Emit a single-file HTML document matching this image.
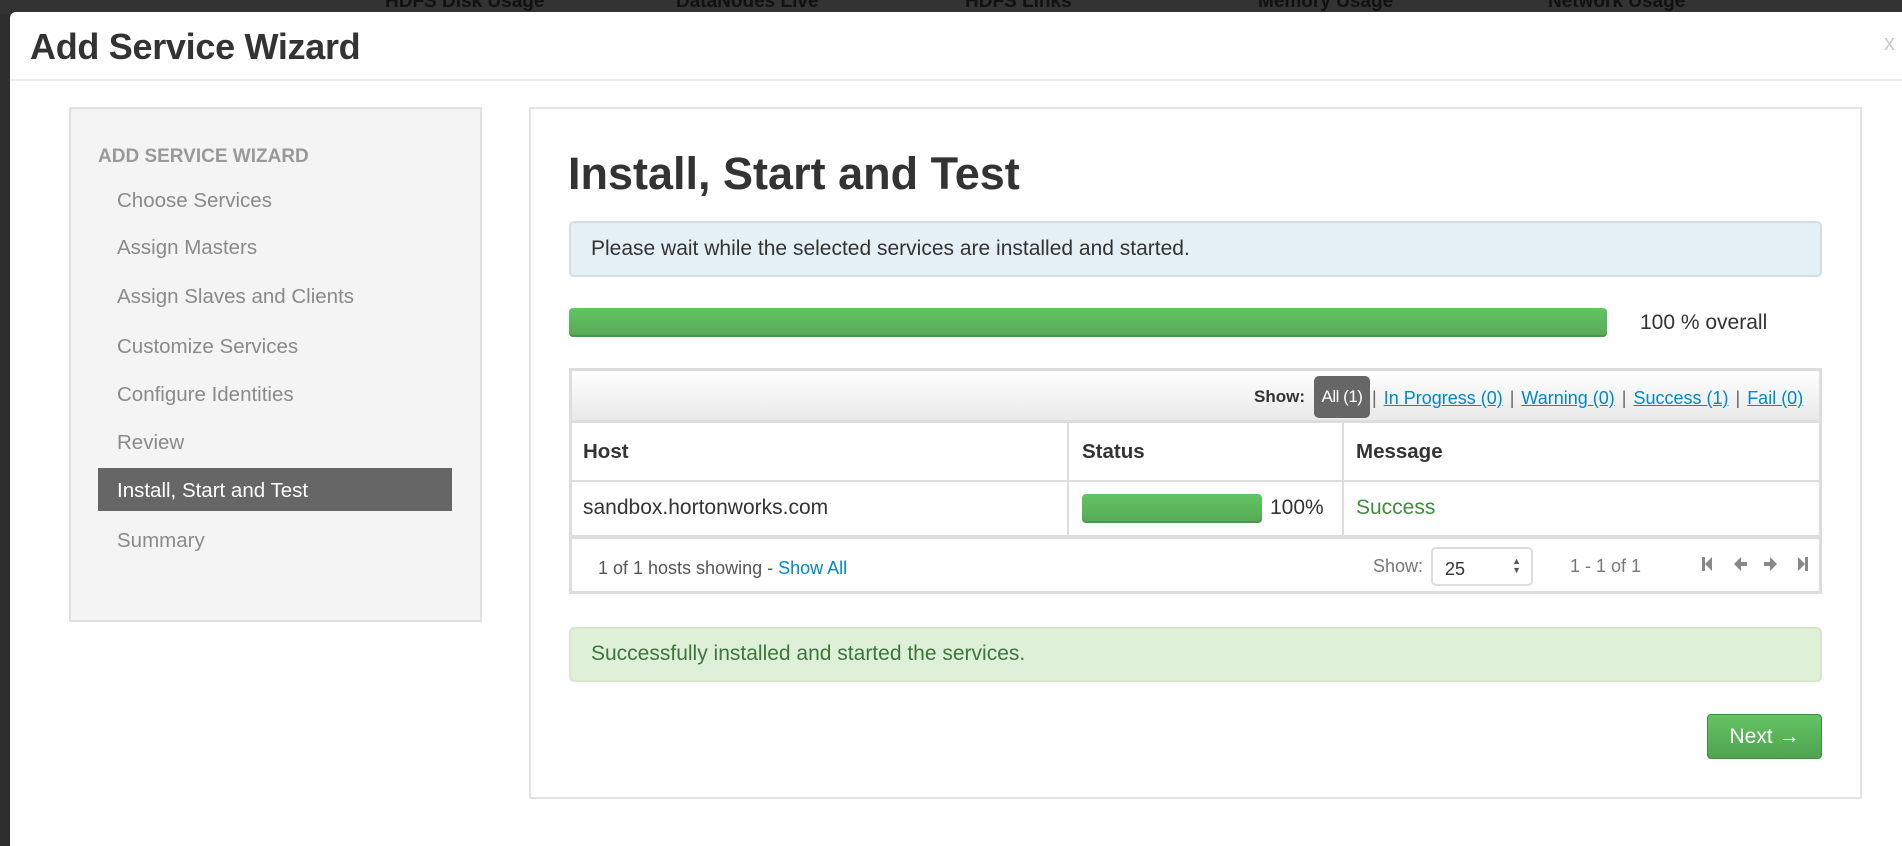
<!DOCTYPE html>
<html><head><meta charset="utf-8"><style>
*{box-sizing:border-box;margin:0;padding:0}
body{width:1902px;height:846px;overflow:hidden;background:#2d2d2d;font-family:"Liberation Sans",Arial,sans-serif;position:relative}
.a{position:absolute;white-space:nowrap}
.topt{color:#111;font-weight:bold;font-size:19px;top:-9px}
.modal{left:10px;top:12px;width:1892px;height:834px;background:#fff;border-radius:6px 0 0 0}
.nav{left:69px;top:107px;width:413px;height:515px;background:#f4f4f4;border:2px solid #e0e0e0}
.nav div{position:absolute;left:46px;font-size:20.5px;color:#8a8a8a}
.main{left:529px;top:107px;width:1333px;height:692px;border:2px solid #e3e3e3}
.bar{background:linear-gradient(#62c462,#57a957);border-radius:4px;box-shadow:inset 0 -2px 0 rgba(0,0,0,.12)}
a{color:#0088cc;text-decoration:underline}
.tbl{left:569px;top:368px;width:1253px;height:226px;border:3px solid #ddd}
.sep{color:#666;margin:0 7px}
</style></head><body>
<div class="a" style="left:0;top:0;width:1902px;height:14px;background:#333"></div>
<div class="a topt" style="left:385px">HDFS Disk Usage</div>
<div class="a topt" style="left:676px">DataNodes Live</div>
<div class="a topt" style="left:965px">HDFS Links</div>
<div class="a topt" style="left:1258px">Memory Usage</div>
<div class="a topt" style="left:1548px">Network Usage</div>
<div class="a modal"></div>
<div class="a" style="left:30px;top:26px;font-size:36px;font-weight:bold;color:#333;letter-spacing:-0.3px">Add Service Wizard</div>
<div class="a" style="left:1884px;top:30px;font-size:22px;color:#ccc">x</div>
<div class="a" style="left:10px;top:79px;width:1892px;height:2px;background:#ececec"></div>

<div class="a nav">
<div style="left:27px;top:37px;font-size:19px;font-weight:bold;color:#999">ADD SERVICE WIZARD</div>
<div style="top:80px">Choose Services</div>
<div style="top:127px">Assign Masters</div>
<div style="top:176px">Assign Slaves and Clients</div>
<div style="top:226px">Customize Services</div>
<div style="top:274px">Configure Identities</div>
<div style="top:322px">Review</div>
<div style="left:27px;top:359px;width:354px;height:43px;background:#666"></div>
<div style="top:370px;color:#fff">Install, Start and Test</div>
<div style="top:420px">Summary</div>
</div>

<div class="a main"></div>
<div class="a" style="left:568px;top:148px;font-size:45px;font-weight:bold;color:#333">Install, Start and Test</div>
<div class="a" style="left:569px;top:221px;width:1253px;height:56px;background:#e5f0f6;border:2px solid #cfdfe8;border-radius:5px;color:#333;font-size:21px;padding:14px 0 0 20px">Please wait while the selected services are installed and started.</div>
<div class="a bar" style="left:569px;top:308px;width:1038px;height:29px"></div>
<div class="a" style="left:1640px;top:311px;font-size:21px;color:#333">100 % overall</div>

<div class="a tbl"></div>
<div class="a" style="left:572px;top:371px;width:1247px;height:52px;background:linear-gradient(#fff,#e9e9e9);border-bottom:3px solid #ddd"></div>
<div class="a" style="left:1254px;top:387px;font-size:17px;font-weight:bold;color:#333">Show:</div>
<div class="a" style="left:1314px;top:376px;width:56px;height:42px;background:#666;border-radius:5px;color:#fff;font-size:17px;text-align:center;line-height:42px;letter-spacing:-0.5px">All (1)</div>
<div class="a" style="left:1372px;top:388px;font-size:18px"><span class="sep" style="margin-left:0">|</span><a>In Progress (0)</a><span class="sep">|</span><a>Warning (0)</a><span class="sep">|</span><a>Success (1)</a><span class="sep">|</span><a>Fail (0)</a></div>
<div class="a" style="left:572px;top:480px;width:1247px;height:2px;background:#ddd"></div>
<div class="a" style="left:572px;top:535px;width:1247px;height:4px;background:#ddd"></div>
<div class="a" style="left:1067px;top:423px;width:2px;height:112px;background:#ddd"></div>
<div class="a" style="left:1342px;top:423px;width:2px;height:112px;background:#ddd"></div>
<div class="a" style="left:583px;top:440px;font-size:20.5px;font-weight:bold;color:#333">Host</div>
<div class="a" style="left:1082px;top:440px;font-size:20.5px;font-weight:bold;color:#333">Status</div>
<div class="a" style="left:1356px;top:440px;font-size:20.5px;font-weight:bold;color:#333">Message</div>
<div class="a" style="left:583px;top:496px;font-size:21px;color:#333">sandbox.hortonworks.com</div>
<div class="a bar" style="left:1082px;top:494px;width:180px;height:29px"></div>
<div class="a" style="left:1270px;top:496px;font-size:21px;color:#333">100%</div>
<div class="a" style="left:1356px;top:496px;font-size:21px;color:#3c8d3c">Success</div>
<div class="a" style="left:598px;top:558px;font-size:18px;color:#555">1 of 1 hosts showing - <a style="text-decoration:none">Show All</a></div>
<div class="a" style="left:1373px;top:556px;font-size:18px;color:#777">Show:</div>
<div class="a" style="left:1431px;top:547px;width:102px;height:39px;border:2px solid #ddd;border-radius:5px;font-size:18px;color:#333;padding:10px 0 0 12px">25<span style="position:absolute;right:10px;top:8px;font-size:9px;line-height:9px;color:#555">▲<br>▼</span></div>
<div class="a" style="left:1570px;top:556px;font-size:18px;color:#777">1 - 1 of 1</div>
<svg class="a" style="left:1700px;top:554px" width="110" height="20" viewBox="0 0 110 20" fill="#888">
<rect x="2" y="3" width="3" height="14"/><path d="M5 10 L12 3 V17Z"/>
<path d="M34 10 L41 3 V8 H47 V12 H41 V17Z"/>
<path d="M77 10 L70 3 V8 H64 V12 H70 V17Z"/>
<rect x="105" y="3" width="3" height="14"/><path d="M105 10 L98 3 V17Z"/>
</svg>

<div class="a" style="left:569px;top:627px;width:1253px;height:55px;background:#dff0d8;border:2px solid #d6e9c6;border-radius:5px;color:#3c763d;font-size:21px;padding:13px 0 0 20px">Successfully installed and started the services.</div>
<div class="a" style="left:1707px;top:714px;width:115px;height:45px;background:linear-gradient(#62c462,#51a351);border:1px solid #3f8f3f;border-radius:4px;color:#fff;font-size:21px;text-align:center;line-height:43px">Next →</div>
</body></html>
